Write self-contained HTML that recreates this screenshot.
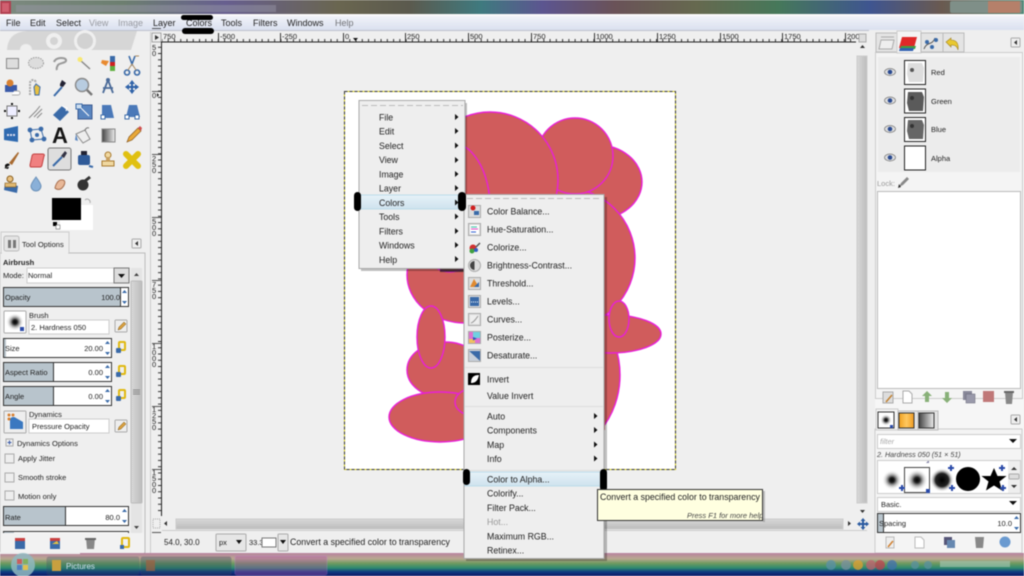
<!DOCTYPE html>
<html><head><meta charset="utf-8"><title>GIMP</title>
<style>
html,body{margin:0;padding:0;width:1024px;height:576px;overflow:hidden;background:#efefef}
svg{display:block;filter:blur(.45px)}
text{font-family:"Liberation Sans",sans-serif;font-size:7.5px;fill:#222}
.mb text{font-size:9px}
.m text{font-size:8.8px}
.s{font-size:7.5px;fill:#222}
</style></head><body>
<svg width="1024" height="576" viewBox="0 0 1024 576" xmlns="http://www.w3.org/2000/svg">
<defs>
<linearGradient id="tb" x1="0" x2="1" y1="0" y2="0">
<stop offset="0" stop-color="#7d8a80"/><stop offset=".12" stop-color="#6d7f70"/><stop offset=".22" stop-color="#675f8f"/><stop offset=".33" stop-color="#6a6650"/><stop offset=".4" stop-color="#5b5a4e"/><stop offset=".47" stop-color="#3f7a7f"/><stop offset=".53" stop-color="#5c5590"/><stop offset=".6" stop-color="#6a5258"/><stop offset=".68" stop-color="#66694f"/><stop offset=".76" stop-color="#46785a"/><stop offset=".85" stop-color="#3f5590"/><stop offset=".92" stop-color="#6a5a50"/><stop offset="1" stop-color="#4f8a78"/>
</linearGradient>
<linearGradient id="mb" x1="0" x2="0" y1="0" y2="1"><stop offset="0" stop-color="#f2f4f9"/><stop offset="1" stop-color="#d9dfef"/></linearGradient>
<linearGradient id="task" x1="0" x2="0" y1="0" y2="1">
<stop offset="0" stop-color="#b882a0"/><stop offset=".25" stop-color="#b8a890"/><stop offset=".45" stop-color="#6f9a60"/><stop offset=".65" stop-color="#2e8a70"/><stop offset=".82" stop-color="#0e3a80"/><stop offset="1" stop-color="#101868"/>
</linearGradient>
<linearGradient id="hl" x1="0" x2="0" y1="0" y2="1"><stop offset="0" stop-color="#e6f2f8"/><stop offset="1" stop-color="#cfe2ee"/></linearGradient>
<linearGradient id="sb" x1="0" x2="0" y1="0" y2="1"><stop offset="0" stop-color="#d8d8d8"/><stop offset="1" stop-color="#bcbcbc"/></linearGradient>
<linearGradient id="sv" x1="0" x2="1" y1="0" y2="0"><stop offset="0" stop-color="#d8d8d8"/><stop offset="1" stop-color="#bcbcbc"/></linearGradient>
<linearGradient id="grd" x1="0" x2="1" y1="0" y2="0"><stop offset="0" stop-color="#444"/><stop offset="1" stop-color="#eee"/></linearGradient>
<linearGradient id="org" x1="0" x2="1" y1="0" y2="0"><stop offset="0" stop-color="#f0a020"/><stop offset=".5" stop-color="#ffc860"/><stop offset="1" stop-color="#ee9a20"/></linearGradient>
<radialGradient id="br1"><stop offset="0" stop-color="#000"/><stop offset=".25" stop-color="#222"/><stop offset="1" stop-color="#fff" stop-opacity="0"/></radialGradient>
<radialGradient id="br2"><stop offset="0" stop-color="#000"/><stop offset=".55" stop-color="#222"/><stop offset="1" stop-color="#fff" stop-opacity="0"/></radialGradient>
<pattern id="tickh" x="343" y="33" width="6.26" height="9" patternUnits="userSpaceOnUse"><rect x="0" y="6" width="1" height="3" fill="#333"/></pattern>
<pattern id="tickv" x="152" y="28" width="9" height="6.26" patternUnits="userSpaceOnUse"><rect x="6" y="0" width="3" height="1" fill="#333"/></pattern>
</defs>

<!-- title bar -->
<rect width="1024" height="15" fill="url(#tb)"/>
<rect x="0" y="1" width="11" height="13" fill="#b04050"/>
<rect x="2" y="3" width="7" height="9" fill="#d06070"/>
<rect x="16" y="5" width="260" height="7" fill="#9a9aa8" opacity=".45"/>
<rect x="950" y="1" width="72" height="12" rx="2" fill="#7f8f88"/><rect x="988" y="1" width="32" height="12" fill="#b5806a"/>

<!-- menubar -->
<rect y="15" width="1024" height="16" fill="url(#mb)"/>
<rect y="14" width="1024" height="2" fill="#fafafa"/>
<rect y="30" width="1024" height="1" fill="#bcc0cc"/>
<g class="mb">
<text x="6" y="26">File</text><text x="30" y="26">Edit</text><text x="56" y="26">Select</text>
<text x="89" y="26" opacity=".4">View</text><text x="118" y="26" opacity=".4">Image</text><text x="153" y="26">Layer</text>
<text x="186" y="26">Colors</text><text x="221" y="26">Tools</text><text x="253" y="26">Filters</text><text x="287" y="26">Windows</text><text x="335" y="26" opacity=".6">Help</text>
</g>
<rect x="181" y="15" width="32" height="5" rx="2.5" fill="#000"/><rect x="182" y="28" width="32" height="6" rx="3" fill="#000"/>

<!-- left dock bg logo -->
<path d="M7 50C8 36 16 31 30 31H137L131 50H32C32 42 20 42 20 50Z" fill="#d6d6d6"/>
<circle cx="54" cy="41" r="8" fill="#efefef"/><circle cx="54" cy="41" r="4" fill="#d4d4d4"/>
<circle cx="85" cy="41" r="11" fill="#efefef"/><circle cx="85" cy="41" r="8" fill="#d2d2d2"/>
<rect y="50" width="150" height="2" fill="#efefef"/>

<!-- tools row 1 -->
<rect x="6.500" y="58.500" width="12" height="10" fill="#ddd" stroke="#888"/>
<ellipse cx="36" cy="63" rx="7.500" ry="5.500" fill="#ddd" stroke="#999" stroke-dasharray="1.500 1"/>
<path d="M54 62c2-5 11-5 12-2 1 3-7 3-8 5-1 2-2 3-1 5" fill="none" stroke="#999" stroke-width="2"/>
<path d="M80 60l10 9" stroke="#888" stroke-width="1.500"/><circle cx="80" cy="59.500" r="2.500" fill="#f8e870"/>
<rect x="110" y="56" width="5" height="6" fill="#3a6aa8"/><rect x="110" y="62" width="5" height="4" fill="#d02020"/><rect x="110" y="66" width="5" height="5" fill="#60b040"/><path d="M102 60l7 1-3 5-5-3z" fill="#e88a30"/>
<path d="M129 56l3 8 3-8M127 70a2.500 2.500 0 1 0 .1 0M137 70a2.500 2.500 0 1 0 .1 0" fill="none" stroke="#3a6aa8" stroke-width="1.600"/>
<path d="M132 64l-4 6M132 64l4 6M135 56h4" stroke="#aa8a60" fill="none"/>
<!-- row 2 -->
<rect x="5" y="85" width="12" height="7" fill="#3a5aa8"/><circle cx="10" cy="83" r="3.500" fill="#d88030"/><path d="M14 91h4a2 2 0 0 1 0 4h-6" stroke="#aaa" fill="#fff"/>
<path d="M30 95V83a3 3 0 0 1 6 0" fill="none" stroke="#aaa" stroke-width="2" stroke-dasharray="2 1"/><path d="M36 84l4 3-1 8h-4l-1-8z" fill="#e8c040" stroke="#3a6aa8"/>
<path d="M54 96l8-9" stroke="#3a6aa8" stroke-width="2"/><path d="M60 84l2-4 4 3-3 4-3-1z" fill="#223"/>
<circle cx="82" cy="85" r="6.500" fill="#b8cce0" stroke="#888" stroke-width="1.400"/><path d="M87 90l5 5" stroke="#777" stroke-width="2.400"/>
<path d="M108 80l-5 13M108 80l5 13M103 88h10" stroke="#4a6a98" stroke-width="1.800" fill="none"/><circle cx="108" cy="80" r="2" fill="#4a6a98"/>
<path d="M132 80l3 4h-2v2h2v-2l4 3-4 3v-2h-2v2h2l-3 4-3-4h2v-2h-2v2l-4-3 4-3v2h2v-2h-2z" fill="#2f62a8"/>
<!-- row 3 -->
<rect x="7" y="106" width="10" height="10" fill="#eef" stroke="#777"/><path d="M12 103v2M12 117v2M4 111h2M18 111h2" stroke="#111" stroke-width="2"/>
<path d="M29 118l7-7 4-5M34 117l8-8M37 118l5-5" stroke="#888" fill="none"/>
<path d="M53 115l9-9 7 6-9 9z" fill="#3a6aa8"/><path d="M62 106l5 2-1 3" stroke="#fff" fill="none"/>
<rect x="78" y="105" width="14" height="14" fill="#5a86c0" stroke="#3a5a90"/><rect x="76" y="104" width="6" height="5" fill="#cde" stroke="#3a6aa8"/><path d="M81 108l8 8" stroke="#fff"/>
<path d="M102 105h9l3 13h-12z" fill="#4a78b8"/><rect x="101" y="115" width="4" height="4" fill="#fff" stroke="#3a6aa8"/>
<path d="M129 105h8l3 12h-14z" fill="#4a78b8"/><rect x="125" y="115" width="4" height="4" fill="#fff" stroke="#3a6aa8"/><rect x="135" y="115" width="4" height="4" fill="#fff" stroke="#3a6aa8"/>
<!-- row 4 -->
<path d="M4 129l14-3v16l-14-2z" fill="#2f6ab0"/><path d="M7 135h9" stroke="#dde" stroke-width="2" stroke-dasharray="2 1"/>
<path d="M30 130l11-1 3 10-12 1z" fill="none" stroke="#3a6aa8"/><circle cx="30" cy="130" r="2.400" fill="#3a6aa8"/><circle cx="41" cy="129" r="2.400" fill="#3a6aa8"/><circle cx="44" cy="139" r="2.400" fill="#3a6aa8"/><circle cx="32" cy="140" r="2.400" fill="#3a6aa8"/><circle cx="37" cy="135" r="2" fill="#3a6aa8"/>
<text x="52" y="143" style="font-size:22px;font-weight:bold;fill:#151515">A</text>
<path d="M76 134l9-4 5 9-7 4z" fill="#eee" stroke="#888"/><path d="M76 134l-1 6 3 1z" fill="#5a86c0"/><path d="M85 131a3 3 0 0 1 4-3" stroke="#777" fill="none"/>
<rect x="102" y="129" width="13" height="13" fill="url(#grd)" stroke="#888"/>
<path d="M127 142l2-5 9-9 3 3-9 9z" fill="#e8a838" stroke="#8a5a20" stroke-width=".7"/><path d="M138 128l3 3 1-3-2-2z" fill="#d05050"/>
<!-- row 5 -->
<path d="M4 168l4-1 1 0-1 2z" fill="#111"/><path d="M5 165c2-2 4-2 5 0l-5 3z" fill="#111"/><path d="M9 163l9-11 1 1-7 12z" fill="#a86a30"/>
<path d="M30 165l2-9c0-1 1-2 2-2h9c1 0 2 1 1 2l-2 9c0 1-1 2-2 2h-9c-1 0-1-1-1-2z" fill="#f08080" stroke="#c04040"/>
<rect x="48" y="148" width="23" height="22" rx="2" fill="#dedede" stroke="#777"/>
<path d="M53 166l9-9" stroke="#3a6aa8" stroke-width="2"/><path d="M61 156l4-5 2 2-3 5z" fill="#334"/>
<rect x="78" y="155" width="12" height="10" rx="2" fill="#2f5a98"/><rect x="81" y="151" width="6" height="4" fill="#223"/><path d="M89 166l4 1" stroke="#3a6aa8" stroke-width="2"/>
<circle cx="108" cy="155" r="3" fill="#f0d8a0" stroke="#a87a30"/><rect x="102" y="161" width="12" height="5" fill="#f0d8a0" stroke="#a87a30"/><rect x="106" y="157" width="4" height="4" fill="#c8a060"/>
<path d="M126 154l12 12M138 154l-12 12" stroke="#e0c010" stroke-width="6" stroke-linecap="round"/>
<!-- row 6 -->
<path d="M5 183l13 3-1 7-13-3z" fill="#3a6aa8"/><rect x="5" y="183" width="11" height="4" fill="#e0b870" stroke="#8a6020" stroke-width=".6"/><circle cx="10" cy="179" r="3" fill="#e8c080" stroke="#8a6020"/>
<path d="M36 177c3 4 5 7 5 9a5 5 0 0 1-10 0c0-2 2-5 5-9z" fill="#8ab0d8" stroke="#6a90b8"/>
<path d="M55 188c1-5 4-9 8-8 3 1 2 5-1 8-2 2-5 2-7 0z" fill="#e8b898" stroke="#a87050"/>
<circle cx="83" cy="185" r="5.500" fill="#333"/><path d="M85 181l5-4" stroke="#333" stroke-width="3"/>

<!-- FG/BG -->
<rect x="60" y="205" width="33" height="25" fill="#fff"/>
<rect x="52" y="198" width="29" height="22" fill="#000"/>
<rect x="53" y="222" width="4" height="4" fill="#000"/><rect x="56" y="225" width="4" height="4" fill="#fff" stroke="#555" stroke-width=".5"/>
<path d="M85 200a3 3 0 0 1 5 3" stroke="#aaa" fill="none"/>

<!-- Tool options -->
<rect x="0" y="253" width="145" height="300" fill="#efefef" stroke="#bbb"/>
<path d="M1 253V232H69V253" fill="#efefef" stroke="#ccc"/><rect x="2" y="252" width="66" height="3" fill="#efefef"/>
<rect x="4" y="236" width="15" height="15" rx="2" fill="#e4e4e4" stroke="#bbb"/><rect x="8" y="240" width="3" height="8" fill="#777"/><rect x="13" y="240" width="3" height="8" fill="#777"/>
<text x="22" y="247">Tool Options</text>
<rect x="132" y="239" width="9" height="9" rx="1" fill="#eee" stroke="#aaa"/><path d="M138 241v5l-3-2.500z" fill="#333"/>
<text x="3" y="265" style="font-weight:bold">Airbrush</text>
<text x="3" y="278">Mode:</text>
<rect x="27" y="268" width="102" height="15" fill="#fff" stroke="#ccc"/><rect x="114" y="268" width="15" height="15" fill="#ddd" stroke="#777"/><path d="M118 274h7l-3.500 4z" fill="#111"/><text x="28" y="278">Normal</text>
<!-- scroll of options -->
<rect x="131" y="268" width="11" height="265" fill="#e4e4e4"/><rect x="131" y="281" width="11" height="222" rx="1" fill="url(#sv)" stroke="#bbb"/>
<path d="M134 276l2.500-3 2.500 3z" fill="#444"/><path d="M134 526l2.500 3 2.500-3z" fill="#444"/><path d="M133 390h7M133 392h7M133 394h7" stroke="#888"/>
<!-- spin bars -->
<g stroke="#333" stroke-width="1">
<rect x="3.500" y="287.500" width="125" height="19" fill="#fff"/><rect x="4" y="288" width="116" height="18" fill="#b8c4cc" stroke="none"/><path d="M120.500 288v18"/>
<rect x="3.500" y="338.500" width="108" height="19" fill="#fff"/><rect x="4" y="339" width="2" height="18" fill="#b8c4cc" stroke="none"/>
<rect x="3.500" y="362.500" width="108" height="19" fill="#fff"/><rect x="4" y="363" width="49" height="18" fill="#b8c4cc" stroke="none"/><path d="M53.500 363v18"/>
<rect x="3.500" y="386.500" width="108" height="19" fill="#fff"/><rect x="4" y="387" width="49" height="18" fill="#b8c4cc" stroke="none"/><path d="M53.500 387v18"/>
<rect x="3.500" y="506.500" width="125" height="19" fill="#fff"/><rect x="4" y="507" width="61" height="18" fill="#b8c4cc" stroke="none"/><path d="M65.500 507v18"/>
<rect x="3.500" y="531.500" width="125" height="8" fill="#fff"/><rect x="4" y="532" width="10" height="7" fill="#b8c4cc" stroke="none"/>
</g>
<g fill="#3a6aa8">
<path d="M122 293l2.500-3 2.500 3zM122 301l2.500 3 2.500-3z"/><path d="M105 344l2.500-3 2.500 3zM105 352l2.500 3 2.500-3z"/><path d="M105 368l2.500-3 2.500 3zM105 376l2.500 3 2.500-3z"/><path d="M105 392l2.500-3 2.500 3zM105 400l2.500 3 2.500-3z"/><path d="M122 512l2.500-3 2.500 3zM122 520l2.500 3 2.500-3z"/>
</g>
<text x="5" y="300">Opacity</text><text x="120" y="300" text-anchor="end">100.0</text>
<text x="5" y="351">Size</text><text x="103" y="351" text-anchor="end">20.00</text>
<text x="5" y="375">Aspect Ratio</text><text x="103" y="375" text-anchor="end">0.00</text>
<text x="5" y="399">Angle</text><text x="103" y="399" text-anchor="end">0.00</text>
<text x="5" y="520">Rate</text><text x="120" y="520" text-anchor="end">80.0</text>
<!-- brush -->
<rect x="4" y="311" width="22" height="22" rx="1" fill="#fff" stroke="#aaa"/><circle cx="15" cy="322" r="9" fill="url(#br1)"/><rect x="20" y="327" width="4" height="4" fill="#2a4aa8"/>
<text x="29" y="318">Brush</text>
<rect x="29" y="320" width="80" height="14" fill="#fff" stroke="#ccc"/><text x="31" y="330">2. Hardness 050</text>
<rect x="115" y="320" width="12" height="12" rx="1" fill="#eee" stroke="#aaa"/><path d="M118 330l1-3 5-5 2 2-5 5z" fill="#d8a040" stroke="#7a5a20" stroke-width=".5"/>
<!-- link icons -->
<g fill="none" stroke="#e0b810" stroke-width="2"><rect x="119" y="342" width="6" height="8" rx="1"/><rect x="119" y="366" width="6" height="8" rx="1"/><rect x="119" y="390" width="6" height="8" rx="1"/></g>
<g fill="#3a6aa8"><rect x="116" y="348" width="5" height="5" rx="1"/><rect x="116" y="372" width="5" height="5" rx="1"/><rect x="116" y="396" width="5" height="5" rx="1"/></g>
<!-- dynamics -->
<rect x="4" y="411" width="22" height="22" rx="1" fill="#eee" stroke="#aaa"/><path d="M10 429v-9c0-3 4-4 6-2l7 4v7z" fill="#3a78c0"/><circle cx="9" cy="415" r="1.500" fill="#d88030"/><circle cx="13" cy="415" r="1.500" fill="#d88030"/><circle cx="9" cy="419" r="1.500" fill="#d88030"/>
<text x="29" y="417">Dynamics</text>
<rect x="29" y="419" width="80" height="14" fill="#fff" stroke="#ccc"/><text x="32" y="429">Pressure Opacity</text>
<rect x="115" y="420" width="12" height="12" rx="1" fill="#eee" stroke="#aaa"/><path d="M118 430l1-3 5-5 2 2-5 5z" fill="#d8a040" stroke="#7a5a20" stroke-width=".5"/>
<rect x="6" y="439" width="7" height="7" fill="#eee" stroke="#aaa"/><path d="M7.500 442.500h4M9.500 440.500v4" stroke="#3a5aa8"/>
<text x="17" y="446">Dynamics Options</text>
<rect x="5" y="454" width="9" height="9" fill="#eee" stroke="#aaa"/><text x="18" y="461">Apply Jitter</text>
<rect x="5" y="473" width="9" height="9" fill="#eee" stroke="#aaa"/><text x="18" y="480">Smooth stroke</text>
<rect x="5" y="491" width="9" height="9" fill="#eee" stroke="#aaa"/><text x="18" y="499">Motion only</text>
<!-- bottom bar -->
<rect x="1" y="533" width="143" height="20" fill="#f2f2f2"/>
<rect x="15" y="538" width="10" height="11" fill="#3a6aa8"/><rect x="15" y="538" width="10" height="3" fill="#c84040"/>
<rect x="50" y="538" width="10" height="11" fill="#3a6aa8"/><rect x="50" y="538" width="10" height="3" fill="#c84040"/><path d="M52 544l5-3 2 3z" fill="#e8c040"/>
<path d="M86 538h9l-1 11h-7z" fill="#888"/><rect x="85" y="538" width="11" height="2" fill="#666"/>
<rect x="122" y="538" width="7" height="9" rx="1" fill="none" stroke="#e0b810" stroke-width="2"/><rect x="120" y="545" width="4" height="4" fill="#3a6aa8"/>

<!-- rulers & canvas -->
<rect x="150" y="32" width="1" height="521" fill="#ccc"/>
<rect x="152" y="33" width="9" height="9" fill="#eee" stroke="#888" stroke-width=".7"/><path d="M155 35l4 2.500-4 2.500z" fill="#333"/>
<rect x="162" y="33" width="694" height="9" fill="url(#tickh)"/>
<rect x="161" y="41.500" width="695" height="1" fill="#222"/>
<rect x="152" y="44" width="9" height="472" fill="url(#tickv)"/>
<rect x="161" y="42" width="1" height="474" fill="#222"/>
<path d="M218.500 33v9M280.500 33v9M343.500 33v9M405.500 33v9M468.500 33v9M531.500 33v9M594.500 33v9M657.500 33v9M720.500 33v9M782.500 33v9M845.500 33v9" stroke="#222" opacity=".9"/>
<g>
<text class="s" x="163" y="39">750</text><text class="s" x="220" y="39">-500</text><text class="s" x="282" y="39">-250</text><text class="s" x="345" y="39">0</text><text class="s" x="407" y="39">250</text><text class="s" x="470" y="39">500</text><text class="s" x="533" y="39">750</text><text class="s" x="596" y="39">1000</text><text class="s" x="659" y="39">1250</text><text class="s" x="722" y="39">1500</text><text class="s" x="784" y="39">1750</text><text class="s" x="847" y="39">200</text>
</g>
<g>
<path d="M152 28.500h9M152 91.500h9M152 154.500h9M152 217.500h9M152 280.500h9M152 343.500h9M152 406.500h9M152 469.500h9M152 532.500h9" stroke="#222" stroke-width=".8"/>
<text class="s" x="152" y="50">5</text><text class="s" x="152" y="56">0</text>
<text class="s" x="152" y="98">0</text>
<text class="s" x="152" y="161">2</text><text class="s" x="152" y="167">5</text><text class="s" x="152" y="173">0</text>
<text class="s" x="152" y="224">5</text><text class="s" x="152" y="230">0</text><text class="s" x="152" y="236">0</text>
<text class="s" x="152" y="287">7</text><text class="s" x="152" y="293">5</text><text class="s" x="152" y="299">0</text>
<text class="s" x="152" y="349">1</text><text class="s" x="152" y="355">0</text><text class="s" x="152" y="361">0</text><text class="s" x="152" y="367">0</text>
<text class="s" x="152" y="412">1</text><text class="s" x="152" y="418">2</text><text class="s" x="152" y="424">5</text><text class="s" x="152" y="430">0</text>
<text class="s" x="152" y="475">1</text><text class="s" x="152" y="481">5</text><text class="s" x="152" y="487">0</text><text class="s" x="152" y="493">0</text>
</g>
<path d="M159 95l-2-2v4z" fill="#111"/>
<path d="M353 38h5l-2.500 3z" fill="#111"/>

<!-- image -->
<rect x="344" y="91.500" width="332" height="378.500" fill="#fff"/>
<rect x="344.500" y="91.500" width="331" height="378" fill="none" stroke="#d8d020"/>
<rect x="344.500" y="91.500" width="331" height="378" fill="none" stroke="#333" stroke-dasharray="3 2"/>
<g fill="#d05c5c" stroke="#e820d8" stroke-width="1.400">
<ellipse cx="597" cy="182" rx="45" ry="37"/>
<circle cx="565" cy="258" r="70"/>
<ellipse cx="550" cy="375" rx="70" ry="80"/>
<ellipse cx="610" cy="334" rx="51" ry="19"/>
<ellipse cx="619" cy="319" rx="10" ry="18"/>
<ellipse cx="465" cy="275" rx="58" ry="48"/>
<ellipse cx="445" cy="370" rx="38" ry="28"/>
<ellipse cx="440" cy="417" rx="51" ry="25"/>
<ellipse cx="475" cy="402" rx="20" ry="14"/>
<ellipse cx="431" cy="337" rx="14" ry="31"/>
</g>
<rect x="465" y="300" width="140" height="130" fill="#d05c5c"/>
<g fill="#d05c5c" stroke="#e820d8" stroke-width="1.400">
<circle cx="575" cy="156" r="38"/>
<circle cx="490" cy="180" r="68"/>
<ellipse cx="450" cy="207" rx="40" ry="65"/>
</g>
<rect x="440" y="268" width="25" height="4" fill="#222" opacity=".7"/>

<!-- scrollbars -->
<rect x="176" y="519" width="667" height="10" fill="url(#sb)" stroke="#ccc"/>
<path d="M167 521v5l-3-2.500zM848 521v5l3-2.500z" fill="#333"/>
<rect x="162" y="530" width="705" height="1" fill="#ccc"/>
<rect x="857" y="56" width="10" height="447" fill="url(#sv)" stroke="#ccc"/>
<path d="M860 48l2.500-3 2.500 3zM860 510l2.500 3 2.500-3z" fill="#333"/>
<rect x="859" y="34" width="7" height="8" fill="#ddd" stroke="#aaa"/>
<rect x="153" y="519" width="7" height="9" fill="none" stroke="#aaa" stroke-dasharray="1 1"/>
<path d="M863 518l2.500 3h-1.500v2h2v-1.500l3 2.500-3 2.500v-1.500h-2v2h1.500l-2.500 3-2.500-3h1.500v-2h-2v1.500l-3-2.500 3-2.500v1.500h2v-2h-1.500z" fill="#2a5aa0"/>

<!-- status -->
<text x="164" y="545" style="font-size:8px">54.0, 30.0</text>
<rect x="216" y="534" width="30" height="17" rx="1" fill="#e6e6e6" stroke="#aaa"/><text x="219" y="545" class="s">px</text><path d="M236 540h6l-3 4z" fill="#111"/>
<text x="249" y="545" class="s">33.3</text><rect x="262" y="538" width="14" height="9" fill="#fff" stroke="#777"/>
<rect x="278" y="534" width="10" height="17" rx="1" fill="#e6e6e6" stroke="#aaa"/><path d="M280 540h6l-3 4z" fill="#111"/>
<text x="290" y="545" style="font-size:8.800px">Convert a specified color to transparency</text>

<!-- right dock -->
<rect x="869" y="30" width="155" height="523" fill="#efefef"/>
<rect x="875" y="52" width="149" height="501" fill="#f6f6f6"/>
<rect x="875.500" y="52.500" width="147" height="346" fill="#f4f4f4" stroke="#ccc"/>
<rect x="876" y="33" width="21" height="19" fill="#e4e4e4" stroke="#bbb"/><path d="M881 40h13l-2 9h-13z" fill="#eee" stroke="#aaa"/><path d="M881 37h13" stroke="#aaa"/>
<rect x="897" y="31" width="24" height="22" fill="#f4f4f4" stroke="#ccc"/>
<path d="M902 37h15l-3 11h-15z" fill="#e02828"/><path d="M901 46l15 0-1 3h-15z" fill="#40a040"/><path d="M900 48h14l-1 3h-14z" fill="#3060b0"/>
<rect x="921" y="33" width="22" height="19" fill="#e4e4e4" stroke="#bbb"/><path d="M924 49c3-8 8-3 11-11" stroke="#555" fill="none"/><circle cx="927" cy="42" r="2" fill="#3a6aa8"/><circle cx="936" cy="40" r="2" fill="#3a6aa8"/><circle cx="932" cy="47" r="2" fill="#3a6aa8"/>
<rect x="943" y="33" width="21" height="19" fill="#e4e4e4" stroke="#bbb"/><path d="M946 42l5-4v2c5 0 8 3 7 10-1-4-3-5-7-5v2z" fill="#e8c830" stroke="#a08020" stroke-width=".6"/>
<rect x="1011" y="38" width="9" height="9" rx="1" fill="#eee" stroke="#aaa"/><path d="M1017 40v5l-3-2.500z" fill="#333"/>

<rect x="878" y="57" width="142" height="115" fill="#ececec"/>
<g fill="#fff" stroke="#222" stroke-width="1">
<rect x="904.500" y="60.500" width="21" height="24"/><rect x="904.500" y="89" width="21" height="24"/><rect x="904.500" y="117.500" width="21" height="24"/><rect x="904.500" y="146" width="21" height="24"/>
</g>
<path d="M908 63h14l2 5-1 14h-14l-2-8z" fill="#ddd"/><circle cx="912" cy="70" r="2" fill="#555"/>
<path d="M908 92h14l2 5-1 14h-14l-2-8z" fill="#5a5a5a"/><circle cx="912" cy="98" r="2" fill="#333"/>
<path d="M908 120h14l2 5-1 14h-14l-2-8z" fill="#666"/><circle cx="912" cy="126" r="2" fill="#333"/>
<g fill="#ddd" stroke="#777" stroke-width=".7"><ellipse cx="890" cy="72" rx="5.500" ry="3.500"/><ellipse cx="890" cy="100.500" rx="5.500" ry="3.500"/><ellipse cx="890" cy="129" rx="5.500" ry="3.500"/><ellipse cx="890" cy="157.500" rx="5.500" ry="3.500"/></g>
<g fill="#2a4a90"><circle cx="890" cy="72" r="2.300"/><circle cx="890" cy="100.500" r="2.300"/><circle cx="890" cy="129" r="2.300"/><circle cx="890" cy="157.500" r="2.300"/></g>
<text x="931" y="75">Red</text><text x="931" y="104">Green</text><text x="931" y="132">Blue</text><text x="931" y="161">Alpha</text>
<text x="877" y="186" style="fill:#999">Lock:</text>
<path d="M899 187l2-4 6-6 2 2-6 6z" fill="#888"/><path d="M898 188l3-1-2-3z" fill="#333"/>
<rect x="877.500" y="191.500" width="143" height="197" fill="#fff" stroke="#bbb"/>
<!-- layer bottom icons -->
<path d="M883 392h10v11h-10z" fill="#ddd" stroke="#aaa"/><path d="M886 402l6-7" stroke="#c08030" stroke-width="1.500"/>
<path d="M903 391h6l3 3v9h-9z" fill="#fff" stroke="#aaa"/>
<path d="M927 391l5 5h-3v6h-4v-6h-3z" fill="#88b078"/><path d="M947 403l5-5h-3v-6h-4v6h-3z" fill="#88b078"/>
<rect x="963" y="391" width="9" height="9" fill="#889"/><rect x="966" y="394" width="9" height="9" fill="#99a" stroke="#667" stroke-width=".5"/>
<rect x="983" y="391" width="11" height="11" fill="#c07878"/>
<path d="M1005 392h8l-1 12h-6z" fill="#888"/><rect x="1004" y="391" width="10" height="2" fill="#666"/>

<!-- brushes dock -->
<rect x="875" y="429" width="147" height="124" fill="#f4f4f4" stroke="#ccc"/>
<rect x="876" y="409" width="22" height="21" fill="#f4f4f4" stroke="#ccc"/><rect x="878" y="412" width="16" height="16" fill="#fff" stroke="#333"/><circle cx="886" cy="420" r="6" fill="url(#br1)"/><rect x="890" y="425" width="3" height="3" fill="#2a4aa8"/>
<rect x="898" y="411" width="20" height="19" fill="#e4e4e4" stroke="#bbb"/><rect x="899" y="413" width="15" height="15" fill="url(#org)" stroke="#333"/>
<rect x="918" y="411" width="20" height="19" fill="#e4e4e4" stroke="#bbb"/><rect x="919" y="413" width="15" height="15" fill="url(#grd)" stroke="#333"/>
<rect x="1011" y="415" width="9" height="9" rx="1" fill="#eee" stroke="#aaa"/><path d="M1017 417v5l-3-2.500z" fill="#333"/>
<rect x="877.500" y="434.500" width="143" height="14" fill="#fff" stroke="#ccc"/>
<text x="880" y="444" style="fill:#aaa;font-style:italic;font-size:7.500px">filter</text><path d="M1009 439h8l-4 4z" fill="#111"/>
<text x="877" y="457" style="font-style:italic;font-size:7.200px;fill:#444">2. Hardness 050 (51 × 51)</text>
<rect x="877.500" y="460.500" width="143" height="33" fill="#fff" stroke="#ccc"/>
<rect x="1008" y="461" width="12" height="32" fill="#eee"/><rect x="1009" y="474" width="10" height="5" rx="1" fill="#ddd" stroke="#aaa"/><path d="M1011 470l3-3 3 3zM1011 485l3 3 3-3z" fill="#333"/>
<circle cx="892" cy="480" r="10" fill="url(#br1)"/>
<rect x="904.500" y="467.500" width="25" height="25" fill="#fff" stroke="#444"/><circle cx="917" cy="480" r="11" fill="url(#br1)"/>
<circle cx="942" cy="480" r="12" fill="url(#br2)"/>
<circle cx="968" cy="479" r="12" fill="#000"/>
<path d="M994 468l3.500 8h9l-7 5.500 2.500 9-8-5-8 5 2.500-9-7-5.500h9z" fill="#000"/>
<g fill="#2a4aa8"><path d="M900 488h2v2h2v2h-2v2h-2v-2h-2v-2h2z" transform="translate(1 -3)"/><path d="M950 465h2v2h2v2h-2v2h-2v-2h-2v-2h2z"/><path d="M1001 465h2v2h2v2h-2v2h-2v-2h-2v-2h2z"/><path d="M951 488h2v2h2v2h-2v2h-2v-2h-2v-2h2z" transform="translate(0 -3)"/><path d="M1002 488h2v2h2v2h-2v2h-2v-2h-2v-2h2z" transform="translate(0 -3)"/><path d="M926 489h4v4h-4z"/><path d="M926 463h3v-2h-1z" fill="#88a"/></g>
<rect x="877.500" y="497.500" width="143" height="14" fill="#fff" stroke="#ccc"/><text x="881" y="507">Basic.</text><path d="M1009 501h8l-4 4z" fill="#111"/>
<rect x="877.500" y="513.500" width="143" height="19" fill="#fff" stroke="#333"/><rect x="878" y="514" width="5" height="18" fill="#b8c4cc"/><path d="M883.500 514v18" stroke="#333"/>
<text x="879" y="526">Spacing</text><text x="1012" y="526" text-anchor="end">10.0</text>
<path d="M1014 519l2.500-3 2.500 3zM1014 527l2.500 3 2.500-3z" fill="#3a6aa8"/>
<path d="M886 537h8v11h-8z" fill="#eee" stroke="#bbb"/><path d="M888 547l5-6" stroke="#d08030" stroke-width="1.500"/>
<path d="M915 537h6l3 3v8h-9z" fill="#fff" stroke="#bbb"/>
<rect x="944" y="537" width="8" height="8" fill="#557"/><rect x="947" y="540" width="8" height="8" fill="#6688b0"/>
<path d="M975 537h9l-1 11h-7z" fill="#888"/>
<circle cx="1005" cy="542" r="5.500" fill="#6a9ad0"/>

<!-- taskbar -->
<rect y="553" width="1024" height="23" fill="url(#task)"/>
<rect x="0" y="552" width="80" height="2" fill="#efefef"/>
<circle cx="23" cy="565" r="12" fill="#90b8c0" opacity=".85"/><path d="M17 559h5v5h-5z" fill="#c86060"/><path d="M23 559h5v5h-5z" fill="#80b060"/><path d="M17 565h5v5h-5z" fill="#5080c0"/><path d="M23 565h5v5h-5z" fill="#e0c050"/>
<rect x="47" y="557" width="92" height="18" rx="2" fill="#2a5a60" opacity=".3" stroke="#446"/>
<rect x="52" y="560" width="9" height="11" fill="#c8a040"/><text x="66" y="569" style="fill:#cde;font-size:8px">Pictures</text>
<rect x="141" y="557" width="90" height="18" rx="2" fill="#2a4a60" opacity=".35" stroke="#446"/><rect x="146" y="560" width="9" height="11" fill="#a06040" opacity=".7"/>
<rect x="235" y="556" width="92" height="19" rx="2" fill="#b04aa8" opacity=".35" stroke="#c070d0"/>
<g opacity=".75"><circle cx="831" cy="565" r="5" fill="#5a90a8"/><circle cx="846" cy="565" r="5" fill="#7a90a0"/><circle cx="858" cy="565" r="5" fill="#e0a030"/><circle cx="871" cy="565" r="5" fill="#c06070"/><circle cx="880" cy="565" r="5" fill="#c04050"/><circle cx="892" cy="565" r="5" fill="#4070b0"/><circle cx="915" cy="565" r="4" fill="#5a90a0"/><circle cx="928" cy="565" r="4" fill="#5a90a0"/></g>
<rect x="940" y="561" width="70" height="6" fill="#a8c8b8" opacity=".6"/>

<!-- Menu 1 -->
<rect x="361" y="103" width="106" height="168" fill="#000" opacity=".25"/>
<rect x="359" y="100.500" width="106" height="168" fill="#eeeeee" stroke="#a8a8a8"/>
<path d="M362 105.500h101" stroke="#bbb" stroke-dasharray="6 3"/>
<rect x="360" y="195" width="104" height="14" fill="url(#hl)" stroke="#bcdcea"/>
<g class="m">
<text x="379" y="120.500">File</text><text x="379" y="134.500">Edit</text><text x="379" y="149">Select</text><text x="379" y="163">View</text><text x="379" y="177.500">Image</text><text x="379" y="191.500">Layer</text><text x="379" y="206">Colors</text><text x="379" y="220">Tools</text><text x="379" y="234.500">Filters</text><text x="379" y="248.500">Windows</text><text x="379" y="263">Help</text>
</g>
<g fill="#111"><path d="M455 114v6l3.500-3zM455 128v6l3.500-3zM455 142.500v6l3.500-3zM455 157v6l3.500-3zM455 171v6l3.500-3zM455 185v6l3.500-3zM455 199.500v6l3.500-3zM455 213.500v6l3.500-3zM455 228v6l3.500-3zM455 242v6l3.500-3zM455 256v6l3.500-3z"/></g>

<!-- Submenu -->
<rect x="466" y="197" width="141" height="364" fill="#000" opacity=".25"/>
<rect x="464" y="194.500" width="140" height="364" fill="#eeeeee" stroke="#a8a8a8"/>
<path d="M467 198.500h134" stroke="#bbb" stroke-dasharray="6 3"/>
<!-- icons -->
<g fill="#ddd" stroke="#aaa">
<rect x="468.500" y="205.500" width="12" height="12"/><rect x="468.500" y="223.500" width="12" height="12"/><rect x="468.500" y="259.500" width="12" height="12" rx="6"/><rect x="468.500" y="277.500" width="12" height="12"/><rect x="468.500" y="295.500" width="12" height="12"/><rect x="468.500" y="313.500" width="12" height="12"/><rect x="468.500" y="331.500" width="12" height="12"/><rect x="468.500" y="349.500" width="12" height="12"/>
</g>
<circle cx="473" cy="208" r="2.500" fill="#d02020"/><rect x="474" y="211" width="5" height="4" fill="#3a6aa8"/>
<rect x="470" y="225" width="9" height="9" fill="#fff"/><path d="M471 227h6" stroke="#30c0a0"/><path d="M471 229h7" stroke="#e040c0"/><path d="M471 232h5" stroke="#3060d0"/>
<circle cx="473" cy="248" r="3.500" fill="#d03030"/><circle cx="472" cy="251" r="2.500" fill="#40a040"/><circle cx="476" cy="250" r="2" fill="#3060c0"/><path d="M476 247l4-4" stroke="#555" stroke-width="1.500"/>
<path d="M474.500 261a4.500 4.500 0 0 0 0 9z" fill="#444"/>
<path d="M470 287l4-8 5 8z" fill="#e08a30"/><path d="M474 287l5-5v5z" fill="#3a6aa8"/>
<rect x="470" y="297" width="9" height="9" fill="#3a6aa8"/><path d="M471 302h7" stroke="#fff" stroke-dasharray="1 1"/>
<rect x="470" y="315" width="9" height="9" fill="#eee"/><path d="M471 323c3-1 5-4 7-7" stroke="#999" fill="none"/>
<rect x="469" y="332" width="11" height="11" fill="#e070d0"/><rect x="473" y="332" width="7" height="6" fill="#70d0e0"/><rect x="469" y="339" width="6" height="4" fill="#f0c060"/><path d="M473 337l4 1.500-4 2z" fill="#3050c0"/>
<path d="M469 351h11v10z" fill="#3a6aa8"/><path d="M469 351v10h11z" fill="#c8d0da"/>
<rect x="468" y="373" width="12" height="12" fill="#000"/><path d="M471 383c0-6 3-8 8-8-1 5-3 8-8 8z" fill="#fff"/>
<path d="M465 367.500h138M465 406.500h138M465 470.500h138" stroke="#ddd"/>
<rect x="465" y="472" width="138" height="14" fill="url(#hl)" stroke="#bcdcea"/>
<g class="m">
<text x="487" y="214.500">Color Balance...</text><text x="487" y="232.500">Hue-Saturation...</text><text x="487" y="250.500">Colorize...</text><text x="487" y="268.500">Brightness-Contrast...</text><text x="487" y="286.500">Threshold...</text><text x="487" y="304.500">Levels...</text><text x="487" y="322.500">Curves...</text><text x="487" y="340.500">Posterize...</text><text x="487" y="358.500">Desaturate...</text>
<text x="487" y="382.500">Invert</text><text x="487" y="399">Value Invert</text>
<text x="487" y="419.500">Auto</text><text x="487" y="433.500">Components</text><text x="487" y="448">Map</text><text x="487" y="462">Info</text>
<text x="487" y="482.500">Color to Alpha...</text><text x="487" y="496.500">Colorify...</text><text x="487" y="511">Filter Pack...</text><text x="487" y="525" style="fill:#999">Hot...</text><text x="487" y="539.500">Maximum RGB...</text><text x="487" y="553.500">Retinex...</text>
</g>
<g fill="#111"><path d="M594 413v6l3.500-3zM594 427v6l3.500-3zM594 441.500v6l3.500-3zM594 455.500v6l3.500-3z"/></g>

<!-- black blobs -->
<rect x="354" y="192" width="7" height="19" rx="3.500" fill="#000"/>
<rect x="458" y="192" width="8" height="19" rx="4" fill="#000"/>
<rect x="463" y="469" width="7" height="16" rx="3.500" fill="#000"/>
<rect x="600" y="469" width="7" height="22" rx="3.500" fill="#000"/>

<!-- tooltip -->
<rect x="597.500" y="489.500" width="165" height="31" fill="#ffffe0" stroke="#333"/>
<rect x="763" y="491" width="2" height="31" fill="#888" opacity=".5"/>
<text x="600" y="500" style="font-size:8.800px">Convert a specified color to transparency</text>
<text x="687" y="518" style="font-size:7.500px;font-style:italic;fill:#444">Press F1 for more help</text>
</svg>
</body></html>
